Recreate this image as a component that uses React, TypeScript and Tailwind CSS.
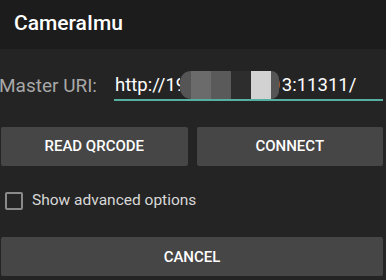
export default function App() {
  return (
    <div className="w-[386px] h-[280px] bg-[#242424] overflow-hidden" style={{ fontFamily: "Roboto, 'Noto Sans', sans-serif" }}>
      <div className="h-[49px] bg-[#1c1c1c] flex items-center px-[14px] pb-[2px]">
        <h1 className="text-[21px] font-medium text-white leading-none">CameraImu</h1>
      </div>

      <div className="flex items-end h-[52px] pr-[3px]">
        <span className="text-[19px] text-[#a8a8a8] w-[115px] -ml-px pb-[6px] leading-none">Master URI:</span>
        <div className="flex-1 border-b-2 border-[#55b0a2] pb-[5px] pl-px flex items-end text-[18.5px] text-white leading-none">
          <span>http://1</span>
          <span className="inline-block w-[4px] overflow-hidden">9</span>
          <span className="flex h-[28px] -mb-[5px] items-stretch">
            <span className="w-[11px] bg-[#555] rounded-l-full" />
            <span className="w-[20px] bg-[#6b6b6b]" />
            <span className="w-[20px] bg-[#5a5a5a]" />
            <span className="w-[20px] bg-[#2d2d2d]" />
            <span className="w-[20px] bg-[#d2d2d2]" />
            <span className="w-[8px] bg-[#555] rounded-r-full" />
          </span>
          <span className="inline-block w-[3px] overflow-hidden"><span className="inline-block -ml-[9px]">0</span></span>
          <span>3:11311/</span>
        </div>
      </div>

      <div className="flex gap-[9px] px-px pt-[26px] pr-[3px]">
        <button className="flex-1 h-[39px] bg-[#464646] rounded-[2px] text-white text-[15px] font-medium">READ QRCODE</button>
        <button className="flex-1 h-[39px] bg-[#464646] rounded-[2px] text-white text-[15px] font-medium">CONNECT</button>
      </div>

      <label className="flex items-center gap-[9px] pl-[5px] pt-[23px]">
        <span className="w-[18px] h-[18px] border-2 border-[#8a8a8a] rounded-[2px]" />
        <span className="text-[15.5px] text-[#d8d8d8]">Show advanced options</span>
      </label>

      <div className="px-px pr-[3px] pt-[25px]">
        <button className="w-full h-[39px] bg-[#464646] rounded-[2px] text-white text-[15px] font-medium">CANCEL</button>
      </div>
    </div>
  );
}
